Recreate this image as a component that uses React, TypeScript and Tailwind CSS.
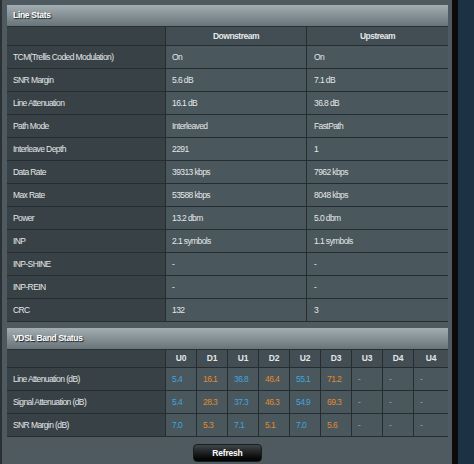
const lineStats: [string, string, string][] = [
  ['TCM(Trellis Coded Modulation)', 'On', 'On'],
  ['SNR Margin', '5.6 dB', '7.1 dB'],
  ['Line Attenuation', '16.1 dB', '36.8 dB'],
  ['Path Mode', 'Interleaved', 'FastPath'],
  ['Interleave Depth', '2291', '1'],
  ['Data Rate', '39313 kbps', '7962 kbps'],
  ['Max Rate', '53588 kbps', '8048 kbps'],
  ['Power', '13.2 dbm', '5.0 dbm'],
  ['INP', '2.1 symbols', '1.1 symbols'],
  ['INP-SHINE', '-', '-'],
  ['INP-REIN', '-', '-'],
  ['CRC', '132', '3'],
];

const bands = ['U0', 'D1', 'U1', 'D2', 'U2', 'D3', 'U3', 'D4', 'U4'];

const bandRows: [string, string[]][] = [
  ['Line Attenuation (dB)', ['5.4', '16.1', '36.8', '46.4', '55.1', '71.2', '-', '-', '-']],
  ['Signal Attenuation (dB)', ['5.4', '28.3', '37.3', '46.3', '54.9', '69.3', '-', '-', '-']],
  ['SNR Margin (dB)', ['7.0', '5.3', '7.1', '5.1', '7.0', '5.6', '-', '-', '-']],
];

function TitleBar({ title }: { title: string }) {
  return (
    <div className="h-[22px] flex items-center pl-[6px] bg-gradient-to-b from-[#a3aeb3] to-[#687479] border-b border-[#283034] text-[8.5px] font-bold tracking-[-0.3px] text-white [text-shadow:1px_1px_1px_#1a1f22]">
      {title}
    </div>
  );
}

function bandColor(band: string, value: string) {
  if (value === '-') return 'text-[#9aa5aa]';
  return band.startsWith('U') ? 'text-[#3ea6dc]' : 'text-[#e08b2f]';
}

export default function App() {
  return (
    <div
      className="flex h-[464px] w-[474px] overflow-hidden bg-[#1d3145] text-[8.5px] tracking-[-0.6px] text-[#e4e7e8]"
      style={{ fontFamily: '"Liberation Sans", Arial, sans-serif' }}
    >
      <div className="w-[2px] bg-[#2a3033]" />
      <div className="w-[450px] bg-[#4e5a5f] pt-[5px] pl-[5px] pr-[4px]">
        {/* Line Stats */}
        <div className="w-[441px]">
          <TitleBar title="Line Stats" />
          <div className="grid h-[19px] grid-cols-[159px_141px_141px] border-b border-[#252d31] font-bold tracking-[-0.5px]">
            <div className="border-r border-[#252d31] bg-[#384246]" />
            <div className="flex items-center justify-center border-r border-[#252d31] bg-[#424e53]">Downstream</div>
            <div className="flex items-center justify-center bg-[#424e53]">Upstream</div>
          </div>
          {lineStats.map(([label, down, up]) => (
            <div key={label} className="grid h-[23px] grid-cols-[159px_141px_141px] border-b border-[#252d31]">
              <div className="flex items-center border-r border-[#252d31] bg-[#384246] pl-[6px]">{label}</div>
              <div className="flex items-center border-r border-[#252d31] bg-[#4a575c] pl-[6px]">{down}</div>
              <div className="flex items-center bg-[#4a575c] pl-[7px]">{up}</div>
            </div>
          ))}
        </div>

        {/* VDSL Band Status */}
        <div className="mt-[6px] w-[441px]">
          <TitleBar title="VDSL Band Status" />
          <div className="grid h-[18px] grid-cols-[159px_31px_31px_31px_31px_31px_31px_31px_31px_34px] border-b border-[#252d31] font-bold tracking-[-0.3px]">
            <div className="border-r border-[#252d31] bg-[#384246]" />
            {bands.map((b, i) => (
              <div
                key={b}
                className={`flex items-center justify-center bg-[#424e53] ${i < bands.length - 1 ? 'border-r border-[#252d31]' : ''}`}
              >
                {b}
              </div>
            ))}
          </div>
          {bandRows.map(([label, values]) => (
            <div
              key={label}
              className="grid h-[23px] grid-cols-[159px_31px_31px_31px_31px_31px_31px_31px_31px_34px] border-b border-[#252d31]"
            >
              <div className="flex items-center border-r border-[#252d31] bg-[#384246] pl-[6px]">{label}</div>
              {values.map((v, i) => (
                <div
                  key={i}
                  className={`flex items-center bg-[#4a575c] pl-[6px] ${bandColor(bands[i], v)} ${i < values.length - 1 ? 'border-r border-[#252d31]' : ''}`}
                >
                  {v}
                </div>
              ))}
            </div>
          ))}
        </div>

        <div className="mt-[7px] flex w-[441px] justify-center">
          <button className="h-[18px] w-[69px] rounded-[4px] border border-[#1a1d1f] bg-gradient-to-b from-[#41474a] to-[#020202] text-[8.5px] font-bold tracking-[-0.2px] text-white">
            Refresh
          </button>
        </div>
      </div>
      <div className="w-[6px] bg-[#0b0b0b]" />
    </div>
  );
}
